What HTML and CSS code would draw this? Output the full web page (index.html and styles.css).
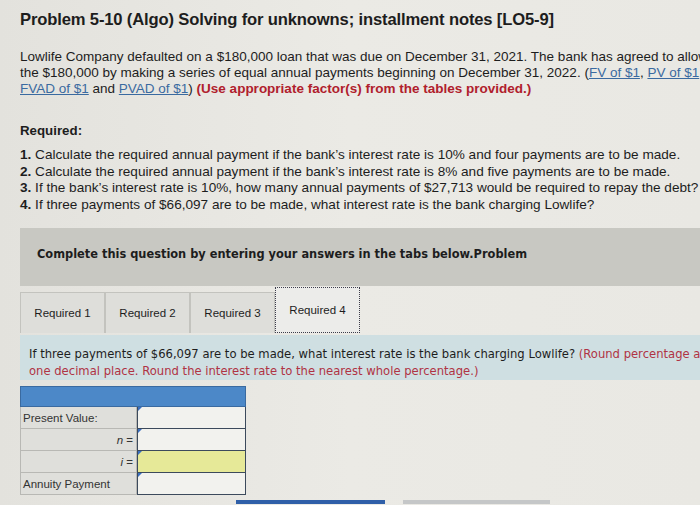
FILE: index.html
```html
<!DOCTYPE html>
<html>
<head>
<meta charset="utf-8">
<link rel="stylesheet" href="styles.css">
</head>
<body>
<div class="page">
  <h1 class="title">Problem 5-10 (Algo) Solving for unknowns; installment notes [LO5-9]</h1>
  <p class="intro">
    <span class="line">Lowlife Company defaulted on a $180,000 loan that was due on December 31, 2021. The bank has agreed to allow Lowlife to repay</span>
    <span class="line">the $180,000 by making a series of equal annual payments beginning on December 31, 2022. (<a class="lnk">FV of $1</a>, <a class="lnk">PV of $1</a>,</span>
    <span class="line"><a class="lnk">FVAD of $1</a> and <a class="lnk">PVAD of $1</a>) <b class="red">(Use appropriate factor(s) from the tables provided.)</b></span>
  </p>
  <h2 class="req">Required:</h2>
  <ol class="list">
    <li><b>1.</b> Calculate the required annual payment if the bank’s interest rate is 10% and four payments are to be made.</li>
    <li><b>2.</b> Calculate the required annual payment if the bank’s interest rate is 8% and five payments are to be made.</li>
    <li><b>3.</b> If the bank’s interest rate is 10%, how many annual payments of $27,713 would be required to repay the debt?</li>
    <li><b>4.</b> If three payments of $66,097 are to be made, what interest rate is the bank charging Lowlife?</li>
  </ol>
  <div class="complete">Complete this question by entering your answers in the tabs below.Problem</div>
  <div class="tabs">
    <div class="tab">Required 1</div>
    <div class="tab">Required 2</div>
    <div class="tab">Required 3</div>
    <div class="tab active">Required 4</div>
  </div>
  <div class="instr">
    <span class="line">If three payments of $66,097 are to be made, what interest rate is the bank charging Lowlife? <span class="red2">(Round percentage answers to</span></span>
    <span class="line red2">one decimal place. Round the interest rate to the nearest whole percentage.)</span>
  </div>
  <div class="table">
    <div class="thead"></div>
    <div class="row"><div class="lab">Present Value:</div><div class="inp"></div></div>
    <div class="row"><div class="lab right"><i>n</i>&nbsp;=</div><div class="inp"></div></div>
    <div class="row"><div class="lab right"><i>i</i>&nbsp;=</div><div class="inp yellow"></div></div>
    <div class="row"><div class="lab">Annuity Payment</div><div class="inp"></div></div>
  </div>
  <div class="bottom">
    <div class="bbar blue"></div>
    <div class="bbar gray"></div>
  </div>
</div>
</body>
</html>
```

FILE: styles.css
```css
html, body {
  margin: 0;
  padding: 0;
  width: 700px;
  height: 505px;
  overflow: hidden;
}
body {
  background: linear-gradient(90deg, #e3e2dd 0%, #ebeae5 50%, #e9e8e3 100%);
  color: #1d1d1d;
  font-family: "Liberation Sans", Arial, sans-serif;
}
.page {
  padding: 11px 0 0 20px;
}
.title {
  margin: 0;
  font-size: 16.6px;
  font-weight: bold;
  letter-spacing: -0.15px;
  line-height: 18px;
  white-space: nowrap;
}
.intro {
  margin: 20px 0 0 0;
  font-size: 13.5px;
  line-height: 16px;
}
.line {
  display: block;
  white-space: nowrap;
}
.lnk {
  color: #3a6aa0;
  text-decoration: underline;
}
.red {
  color: #b0202c;
}
.req {
  margin: 26px 0 0 0;
  font-size: 13.3px;
  line-height: 16px;
  font-weight: bold;
}
.list {
  list-style: none;
  margin: 8px 0 0 0;
  padding: 0;
  font-size: 13.6px;
  line-height: 16.5px;
}
.list li {
  white-space: nowrap;
}
.complete {
  margin-top: 15px;
  height: 58px;
  box-sizing: border-box;
  padding: 20px 0 0 17px;
  background: #c8c8c2;
  font-family: "DejaVu Sans", Verdana, sans-serif;
  font-size: 11.4px;
  font-weight: bold;
  line-height: 13px;
  white-space: nowrap;
}
.tabs {
  display: flex;
  margin-top: 6px;
  height: 41px;
}
.tab {
  width: 85px;
  box-sizing: border-box;
  border: 1px solid #c3c3be;
  border-bottom: none;
  background: #dededa;
  font-size: 11.5px;
  display: flex;
  align-items: center;
  justify-content: center;
}
.tab.active {
  background: #ececea;
  border: 1px dotted #3c3c4a;
  margin-top: -5px;
  height: 46px;
}
.instr {
  margin-top: 2px;
  height: 45px;
  box-sizing: border-box;
  background: #cfdfe2;
  padding: 11px 0 0 9px;
  font-family: "DejaVu Sans", Verdana, sans-serif;
  font-size: 11.6px;
  line-height: 17px;
}
.red2 {
  color: #b03344;
}
.table {
  margin-top: 6px;
  width: 226px;
  font-size: 11.5px;
}
.thead {
  height: 21px;
  box-sizing: border-box;
  background: #4c88c8;
  border: 1px solid #3a6aa0;
}
.row {
  display: flex;
  height: 22px;
}
.lab {
  width: 117px;
  box-sizing: border-box;
  background: #dfdfdb;
  border: 1px solid #b8b8b4;
  border-top: none;
  padding: 0 0 0 2px;
  display: flex;
  align-items: center;
  color: #333;
}
.lab.right {
  justify-content: flex-end;
  padding-right: 3px;
}
.inp {
  flex: 1;
  position: relative;
  background: #f2f2ee;
  border: 1.5px solid #3c4a5c;
  border-top: none;
}
.inp::before {
  content: "";
  position: absolute;
  left: 0;
  top: 0;
  border-top: 4px solid #3a6fc0;
  border-right: 4px solid transparent;
}
.inp.yellow {
  background: #e6e998;
}
.bottom {
  display: flex;
  margin-top: 5px;
  padding-left: 216px;
  gap: 18px;
}
.bbar {
  height: 4px;
}
.bbar.blue {
  width: 149px;
  background: #2f5fa8;
}
.bbar.gray {
  width: 147px;
  background: #c5c7c8;
}
```
